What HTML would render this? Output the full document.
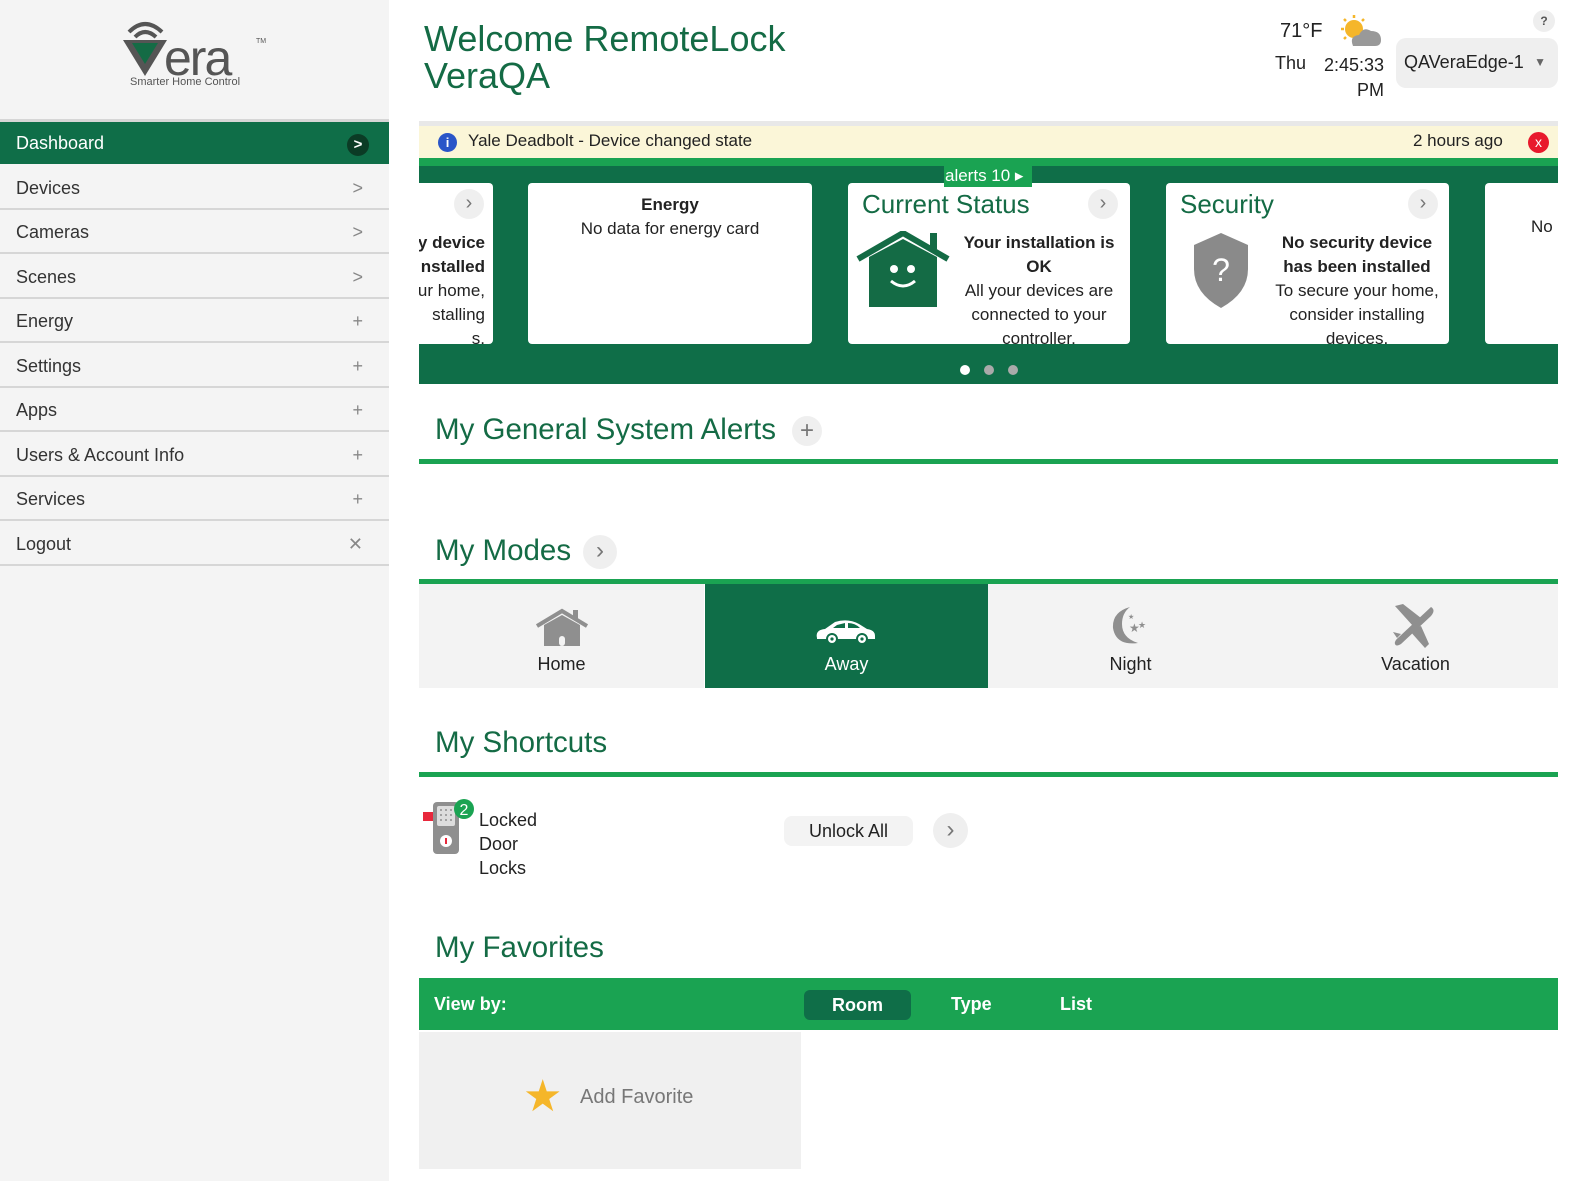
<!DOCTYPE html>
<html><head><meta charset="utf-8">
<style>
*{box-sizing:border-box;margin:0;padding:0}
body{width:1580px;height:1190px;background:#fff;font-family:"Liberation Sans",sans-serif;position:relative;overflow:hidden;color:#222}
.abs{position:absolute}
#side{left:0;top:0;width:389px;height:1181px;background:#f4f4f4}
.mi{position:absolute;left:0;width:389px;height:44px;border-bottom:2px solid #d6d6d6;font-size:18px;color:#333;padding-left:16px;line-height:44px}
.mi .r{position:absolute;right:26px;top:0;color:#888;font-size:18px}
.h2{position:absolute;left:435px;font-size:29.5px;color:#146b45}
.gl{position:absolute;left:419px;width:1139px;height:5px;background:#1aa352}
.card{position:absolute;top:183px;height:161px;background:#fff;border-radius:4px;overflow:hidden;text-align:center;font-size:17px}
.chev{position:absolute;width:30px;height:30px;border-radius:50%;background:#efefef;color:#777;text-align:center;line-height:28px;font-size:20px}
.mode{position:absolute;top:584px;width:285px;height:104px;background:#f3f3f3;text-align:center;font-size:18px;color:#222}
.mode span{position:absolute;left:0;right:0;top:70px}
</style></head><body>
<div id="side" class="abs">
  <svg class="abs" style="left:120px;top:14px" width="150" height="76" viewBox="0 0 150 76">
    <path d="M9 18 Q25 2 42 18" stroke="#555" stroke-width="4" fill="none"/>
    <path d="M15 23 Q25 13 36 23" stroke="#555" stroke-width="4" fill="none"/>
    <path d="M3 26 L25 62 L47 26Z" fill="#555"/>
    <path d="M12 29 L25 50 L38 29Z" fill="#146b45"/>
    <text x="44" y="61" font-size="50" font-family="Liberation Sans" fill="#555" letter-spacing="-2">era</text>
    <text x="136" y="29" font-size="7" fill="#555">TM</text>
    <text x="10" y="71" font-size="11" fill="#555">Smarter Home Control</text>
  </svg>
  <div class="abs" style="left:0;top:119px;width:389px;height:3px;background:#d6d6d6"></div>
  <div class="abs" style="left:0;top:122px;width:389px;height:42px;background:#0f6e48;color:#fff;font-size:18px;line-height:42px;padding-left:16px">Dashboard
    <div class="abs" style="right:20px;top:12px;width:22px;height:22px;border-radius:50%;background:#0b3b25;color:#fff;font-size:15px;line-height:21px;text-align:center;font-weight:bold">&gt;</div></div>
  <div class="mi" style="top:166px">Devices<span class="r">&gt;</span></div>
  <div class="mi" style="top:210px">Cameras<span class="r">&gt;</span></div>
  <div class="mi" style="top:255px">Scenes<span class="r">&gt;</span></div>
  <div class="mi" style="top:299px">Energy<span class="r">+</span></div>
  <div class="mi" style="top:344px">Settings<span class="r">+</span></div>
  <div class="mi" style="top:388px">Apps<span class="r">+</span></div>
  <div class="mi" style="top:433px">Users &amp; Account Info<span class="r">+</span></div>
  <div class="mi" style="top:477px">Services<span class="r">+</span></div>
  <div class="mi" style="top:522px">Logout<span class="r">✕</span></div>
</div>

<div class="abs" style="left:424px;top:20px;font-size:36px;line-height:37px;color:#146b45">Welcome RemoteLock<br>VeraQA</div>
<div class="abs" style="left:1280px;top:20px;font-size:20px">71°F</div>
<svg class="abs" style="left:1337px;top:14px" width="48" height="34" viewBox="0 0 48 34">
  <circle cx="17" cy="15" r="9" fill="#f5b62a"/>
  <g stroke="#f5b62a" stroke-width="2.5"><line x1="17" y1="1" x2="17" y2="4"/><line x1="4" y1="15" x2="7" y2="15"/><line x1="7" y1="5" x2="9" y2="7"/><line x1="27" y1="5" x2="25" y2="7"/><line x1="7" y1="25" x2="9" y2="23"/></g>
  <path d="M16 32 Q12 22 22 21 Q26 12 34 17 Q44 17 44 26 Q44 32 38 32Z" fill="#999"/>
</svg>
<div class="abs" style="left:1275px;top:53px;font-size:18px">Thu</div>
<div class="abs" style="left:1324px;top:53px;font-size:18px;text-align:right;width:60px;line-height:25px">2:45:33<br>PM</div>
<div class="abs" style="left:1396px;top:38px;width:162px;height:50px;background:#efefef;border-radius:10px;font-size:18px;line-height:48px;padding-left:8px">QAVeraEdge-1<span style="position:absolute;right:12px;top:0;color:#666;font-size:12px">▼</span></div>
<div class="abs" style="left:1533px;top:10px;width:22px;height:22px;border-radius:50%;background:#eee;color:#555;font-size:12px;text-align:center;line-height:22px;font-weight:bold">?</div>

<div class="abs" style="left:419px;top:121px;width:1139px;height:5px;background:#e8e8e8"></div>
<div class="abs" style="left:419px;top:126px;width:1139px;height:32px;background:#fbf6d8;font-size:17px;line-height:30px">
  <div class="abs" style="left:19px;top:7px;width:19px;height:19px;border-radius:50%;background:#2a55c8;color:#fff;font-size:13px;line-height:19px;text-align:center;font-weight:bold">i</div>
  <span class="abs" style="left:49px">Yale Deadbolt - Device changed state</span>
  <span class="abs" style="left:994px">2 hours ago</span>
  <div class="abs" style="left:1109px;top:6px;width:21px;height:21px;border-radius:50%;background:#e8192c;color:#fff;font-size:14px;line-height:20px;text-align:center">x</div>
</div>
<div class="abs" style="left:419px;top:158px;width:1139px;height:8px;background:#1aa352"></div>
<div class="abs" style="left:419px;top:166px;width:1139px;height:218px;background:#0f6e48"></div>
<div class="card" style="left:419px;width:74px;border-radius:0 4px 4px 0">
  <div class="chev" style="left:35px;top:6px">›</div>
  <div class="abs" style="right:8px;top:48px;text-align:right;line-height:24px;white-space:nowrap"><b>y device</b><br><b>nstalled</b><br>ur home,<br>stalling<br>s.</div>
</div>
<div class="card" style="left:528px;width:284px"><div style="margin-top:10px;line-height:24px"><b>Energy</b><br>No data for energy card</div></div>
<div class="card" style="left:848px;width:282px;text-align:left">
  <div class="abs" style="left:14px;top:6px;font-size:26px;color:#146b45">Current Status</div>
  <div class="chev" style="left:240px;top:6px">›</div>
  <svg class="abs" style="left:8px;top:48px" width="94" height="78" viewBox="0 0 94 78">
    <path d="M2 28 L47 2 L92 28" stroke="#146b45" stroke-width="6" fill="none"/><rect x="74" y="2" width="7" height="16" fill="#146b45"/>
    <path d="M13 26 L47 8 L81 26 V76 H13Z" fill="#146b45"/>
    <circle cx="38" cy="38" r="4" fill="#fff"/><circle cx="55" cy="38" r="4" fill="#fff"/>
    <path d="M35 50 Q47 60 59 50" stroke="#fff" stroke-width="3" fill="none"/>
  </svg>
  <div class="abs" style="left:104px;width:174px;top:48px;text-align:center;line-height:24px"><b>Your installation is OK</b><br>All your devices are connected to your controller.</div>
</div>
<div class="abs" style="left:944px;top:165px;width:88px;height:22px;background:#1aa352;color:#fff;font-size:17px;line-height:22px;padding-left:1px">alerts 10 ▸</div>
<div class="card" style="left:1166px;width:283px;text-align:left">
  <div class="abs" style="left:14px;top:6px;font-size:26px;color:#146b45">Security</div>
  <div class="chev" style="left:242px;top:6px">›</div>
  <svg class="abs" style="left:26px;top:50px" width="58" height="76" viewBox="0 0 58 76">
    <path d="M29 0 L56 12 V36 Q56 60 29 75 Q2 60 2 36 V12Z" fill="#8a8a8a"/>
    <text x="29" y="48" font-size="32" fill="#fff" text-anchor="middle" font-family="Liberation Sans">?</text>
  </svg>
  <div class="abs" style="left:100px;width:182px;top:48px;text-align:center;line-height:24px"><b>No security device has been installed</b><br>To secure your home, consider installing devices.</div>
</div>
<div class="card" style="left:1485px;width:90px;text-align:left"><div class="abs" style="left:46px;top:34px">No</div></div>
<div class="abs" style="left:960px;top:365px;width:10px;height:10px;border-radius:50%;background:#fff"></div>
<div class="abs" style="left:984px;top:365px;width:10px;height:10px;border-radius:50%;background:#aaa"></div>
<div class="abs" style="left:1008px;top:365px;width:10px;height:10px;border-radius:50%;background:#aaa"></div>

<div class="h2" style="top:413px">My General System Alerts</div>
<div class="chev" style="left:792px;top:416px;font-size:24px;line-height:29px">+</div>
<div class="gl" style="top:459px"></div>

<div class="h2" style="top:534px">My Modes</div>
<div class="chev" style="left:583px;top:535px;width:34px;height:34px;line-height:32px;font-size:24px">›</div>
<div class="gl" style="top:579px"></div>
<div class="mode" style="left:419px"><svg class="abs" style="left:117px;top:24px" width="52" height="40" viewBox="0 0 52 40"><path d="M1 18 L26 3 L51 18" stroke="#8f8f8f" stroke-width="4" fill="none"/><rect x="37" y="2" width="5" height="10" fill="#8f8f8f"/><path d="M8 17 L26 7 L44 17 V38 H8Z" fill="#8f8f8f"/><rect x="23" y="28" width="6" height="10" rx="3" fill="#f3f3f3"/></svg><span>Home</span></div>
<div class="mode" style="left:705px;background:#0f6e48;color:#fff;width:283px"><svg class="abs" style="left:110px;top:34px" width="62" height="30" viewBox="0 0 62 30"><path d="M2 20 Q0 12 10 11 L20 4 Q33 0 44 6 L52 11 Q60 12 60 18 V21 H2Z" fill="#fff"/><path d="M22 7 L30 5 V10 H18Z M33 5 Q40 5 45 10 H33Z" fill="#0f6e48"/><circle cx="17" cy="21" r="6" fill="#0f6e48"/><circle cx="17" cy="21" r="4" fill="#fff"/><circle cx="17" cy="21" r="1.6" fill="#0f6e48"/><circle cx="47" cy="21" r="6" fill="#0f6e48"/><circle cx="47" cy="21" r="4" fill="#fff"/><circle cx="47" cy="21" r="1.6" fill="#0f6e48"/></svg><span>Away</span></div>
<div class="mode" style="left:988px"><svg class="abs" style="left:122px;top:20px" width="40" height="44" viewBox="0 0 40 44"><path d="M20 3 Q2 8 3 24 Q6 42 28 39 Q12 34 12 20 Q12 9 20 3Z" fill="#8f8f8f"/><text x="19" y="28" font-size="12" fill="#8f8f8f">★</text><text x="28" y="24" font-size="9" fill="#8f8f8f">★</text><text x="18" y="15" font-size="7" fill="#8f8f8f">★</text></svg><span>Night</span></div>
<div class="mode" style="left:1273px"><svg class="abs" style="left:118px;top:20px" width="46" height="44" viewBox="0 0 46 44"><path d="M40 3 Q45 6 40 12 L10 40 Q5 43 4 40 Q3 37 8 33 Z" fill="#8f8f8f"/><path d="M4 2 L12 0 L30 14 L22 22Z M18 26 L30 22 L38 40 L34 44Z M2 28 L10 30 L6 34Z" fill="#8f8f8f"/></svg><span>Vacation</span></div>

<div class="h2" style="top:726px">My Shortcuts</div>
<div class="gl" style="top:772px"></div>
<svg class="abs" style="left:423px;top:798px" width="54" height="56" viewBox="0 0 54 56"><rect x="0" y="14" width="10" height="9" fill="#e8283c"/><rect x="10" y="4" width="26" height="52" rx="4" fill="#8f8f8f"/><rect x="14" y="8" width="18" height="20" rx="2" fill="#ddd"/><g fill="#8f8f8f"><circle cx="18" cy="12" r="1"/><circle cx="23" cy="12" r="1"/><circle cx="28" cy="12" r="1"/><circle cx="18" cy="17" r="1"/><circle cx="23" cy="17" r="1"/><circle cx="28" cy="17" r="1"/><circle cx="18" cy="22" r="1"/><circle cx="23" cy="22" r="1"/><circle cx="28" cy="22" r="1"/></g><circle cx="23" cy="43" r="6" fill="#fff"/><rect x="22" y="40" width="2" height="6" fill="#e8283c"/><circle cx="41" cy="11" r="10" fill="#1aa352"/><text x="41" y="17" font-size="16" fill="#fff" text-anchor="middle" font-family="Liberation Sans">2</text></svg>
<div class="abs" style="left:479px;top:808px;font-size:18px;line-height:24px">Locked<br>Door<br>Locks</div>
<div class="abs" style="left:784px;top:816px;width:129px;height:30px;border-radius:8px;background:#f3f3f3;font-size:18px;line-height:30px;text-align:center">Unlock All</div>
<div class="chev" style="left:933px;top:813px;width:35px;height:35px;line-height:33px;font-size:24px">›</div>

<div class="h2" style="top:931px">My Favorites</div>
<div class="abs" style="left:419px;top:978px;width:1139px;height:52px;background:#1aa352;color:#fff;font-size:18px;font-weight:bold;line-height:52px">
  <span class="abs" style="left:15px">View by:</span>
  <div class="abs" style="left:385px;top:12px;width:107px;height:30px;border-radius:6px;background:#0f6e48;line-height:30px;text-align:center">Room</div>
  <span class="abs" style="left:532px">Type</span>
  <span class="abs" style="left:641px">List</span>
</div>
<div class="abs" style="left:419px;top:1032px;width:382px;height:137px;background:#f0f0f0">
  <div class="abs" style="left:104px;top:40px;font-size:44px;color:#f5b62a;line-height:50px">★</div>
  <div class="abs" style="left:161px;top:54px;font-size:20px;color:#777">Add Favorite</div>
</div>
</body></html>
